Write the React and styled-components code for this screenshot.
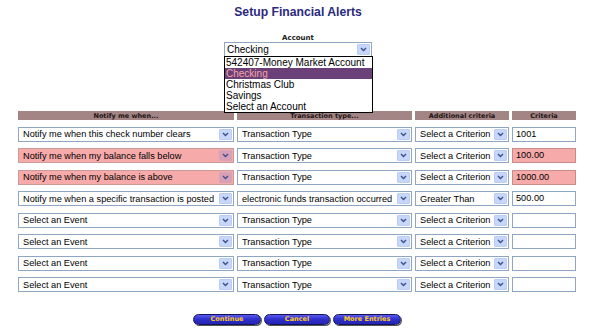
import styled, { createGlobalStyle } from "styled-components";

const GlobalStyle = createGlobalStyle`
    body {
        margin: 0;
        background: #fff;
    }
`

const Page = styled.div`
    width: 600px;
    height: 335px;
    display: flex;
    flex-direction: column;
    align-items: center;
    font-family: "Liberation Sans", Arial, sans-serif;
    overflow: hidden;
`

const Title = styled.h1`
    margin: 4px 0 0 -4px;
    height: 17px;
    line-height: 17px;
    font-size: 12.2px;
    font-weight: bold;
    color: #2a2a7e;
`

const AccountBlock = styled.div`
    position: relative;
    margin-top: 13px;
    margin-left: -4px;
    width: 148px;
    display: flex;
    flex-direction: column;
    align-items: center;
`

const SmallLabel = styled.div`
    font-family: "DejaVu Sans", Verdana, sans-serif;
    font-size: 7px;
    font-weight: bold;
    color: #1a1a1a;
    line-height: 8px;
`

const Box = styled.div`
    box-sizing: border-box;
    display: flex;
    align-items: center;
    height: 15px;
    width: ${p => p.$w}px;
    border: 1px solid ${p => p.$pink ? "#c99a9a" : "#8fa6c2"};
    background: ${p => p.$pink ? "#f7aaaa" : "#fff"};
    font-size: ${p => p.$big ? 10 : 9.2}px;
    color: #000;
    padding-left: ${p => p.$big ? 2 : 4}px;
    white-space: nowrap;
    overflow: hidden;
`

const BoxText = styled.span`
    flex: 1;
    overflow: hidden;
`

const Arrow = styled.span`
    box-sizing: border-box;
    flex: none;
    width: 13px;
    height: 11px;
    margin-right: 1px;
    display: flex;
    align-items: center;
    justify-content: center;
    border: 1px solid ${p => p.$pink ? "#d6a3bb" : "#bccdf3"};
    background: ${p => p.$pink ? "#d7a0b8" : "#c7d6fb"};
    border-radius: 1px;
`

const DropList = styled.div`
    position: absolute;
    top: calc(100% - 1px);
    left: 0;
    width: 149px;
    box-sizing: border-box;
    border: 1px solid #000;
    background: #fff;
    z-index: 2;
    padding: 0;
`

const DropItem = styled.div`
    height: 11px;
    line-height: 11px;
    font-size: 10px;
    padding-left: 1px;
    white-space: nowrap;
    color: ${p => p.$active ? "#f2a6a6" : "#000"};
    background: ${p => p.$active ? "#6b3f78" : "transparent"};
`

const AlertGrid = styled.div`
    margin-top: 54px;
    margin-left: -6px;
    display: grid;
    grid-template-columns: 216px 175px 94px 64px;
    column-gap: 3px;
    row-gap: 6.5px;
`

const HeadCell = styled.div`
    height: 9px;
    background: #a38585;
    font-family: "DejaVu Sans", Verdana, sans-serif;
    font-size: 6.5px;
    font-weight: bold;
    color: #1e1414;
    text-align: center;
    line-height: 10px;
`

const Input = styled.div`
    box-sizing: border-box;
    height: 15px;
    border: 1px solid ${p => p.$pink ? "#c98a8a" : "#8fa6c2"};
    background: ${p => p.$pink ? "#f7aaaa" : "#fff"};
    font-size: 9.2px;
    line-height: 13px;
    padding-left: 3px;
`

const ButtonBar = styled.div`
    margin-top: 22px;
    margin-left: -6px;
    display: flex;
    gap: 3px;
`

const PillButton = styled.button`
    width: ${p => p.$w}px;
    height: 11px;
    padding: 0;
    border: 1px solid #14145a;
    border-radius: 6px;
    background: linear-gradient(#5a5af0, #3030cc 45%, #2424b0);
    box-shadow: 1px 1px 0 #555;
    color: #ffcc22;
    font-family: "DejaVu Sans", Verdana, sans-serif;
    font-size: 6.5px;
    font-weight: bold;
    line-height: 9px;
`

function Chevron() {
    return (
        <svg width="7" height="5" viewBox="0 0 7 5">
            <path d="M1 1 L3.5 3.5 L6 1" fill="none" stroke="#3d4f86" strokeWidth="1.4" />
        </svg>
    )
}

function FakeSelect({ value, width, pink, big }) {
    return (
        <Box $w={width} $pink={pink} $big={big}>
            <BoxText>{value}</BoxText>
            <Arrow $pink={pink}><Chevron /></Arrow>
        </Box>
    )
}

const accounts = [
    "542407-Money Market Account",
    "Checking",
    "Christmas Club",
    "Savings",
    "Select an Account",
]

const rows = [
    { event: "Notify me when this check number clears", type: "Transaction Type", crit: "Select a Criterion", value: "1001" },
    { event: "Notify me when my balance falls below", type: "Transaction Type", crit: "Select a Criterion", value: "100.00", pink: true },
    { event: "Notify me when my balance is above", type: "Transaction Type", crit: "Select a Criterion", value: "1000.00", pink: true },
    { event: "Notify me when a specific transaction is posted", type: "electronic funds transaction occurred", crit: "Greater Than", value: "500.00" },
    { event: "Select an Event", type: "Transaction Type", crit: "Select a Criterion", value: "" },
    { event: "Select an Event", type: "Transaction Type", crit: "Select a Criterion", value: "" },
    { event: "Select an Event", type: "Transaction Type", crit: "Select a Criterion", value: "" },
    { event: "Select an Event", type: "Transaction Type", crit: "Select a Criterion", value: "" },
]

export default function App() {
    return (
        <>
            <GlobalStyle />
            <Page>
                <Title>Setup Financial Alerts</Title>
                <AccountBlock>
                    <SmallLabel>Account</SmallLabel>
                    <FakeSelect value="Checking" width={148} big />
                    <DropList>
                        {accounts.map(a => (
                            <DropItem key={a} $active={a === "Checking"}>{a}</DropItem>
                        ))}
                    </DropList>
                </AccountBlock>
                <AlertGrid>
                    <HeadCell>Notify me when...</HeadCell>
                    <HeadCell>Transaction type...</HeadCell>
                    <HeadCell>Additional criteria</HeadCell>
                    <HeadCell>Criteria</HeadCell>
                    {rows.map((r, i) => (
                        <Row key={i} row={r} />
                    ))}
                </AlertGrid>
                <ButtonBar>
                    <PillButton $w={68}>Continue</PillButton>
                    <PillButton $w={66}>Cancel</PillButton>
                    <PillButton $w={68}>More Entries</PillButton>
                </ButtonBar>
            </Page>
        </>
    )
}

function Row({ row }) {
    return (
        <>
            <FakeSelect value={row.event} width={216} pink={row.pink} />
            <FakeSelect value={row.type} width={175} />
            <FakeSelect value={row.crit} width={94} />
            <Input $pink={row.pink}>{row.value}</Input>
        </>
    )
}
